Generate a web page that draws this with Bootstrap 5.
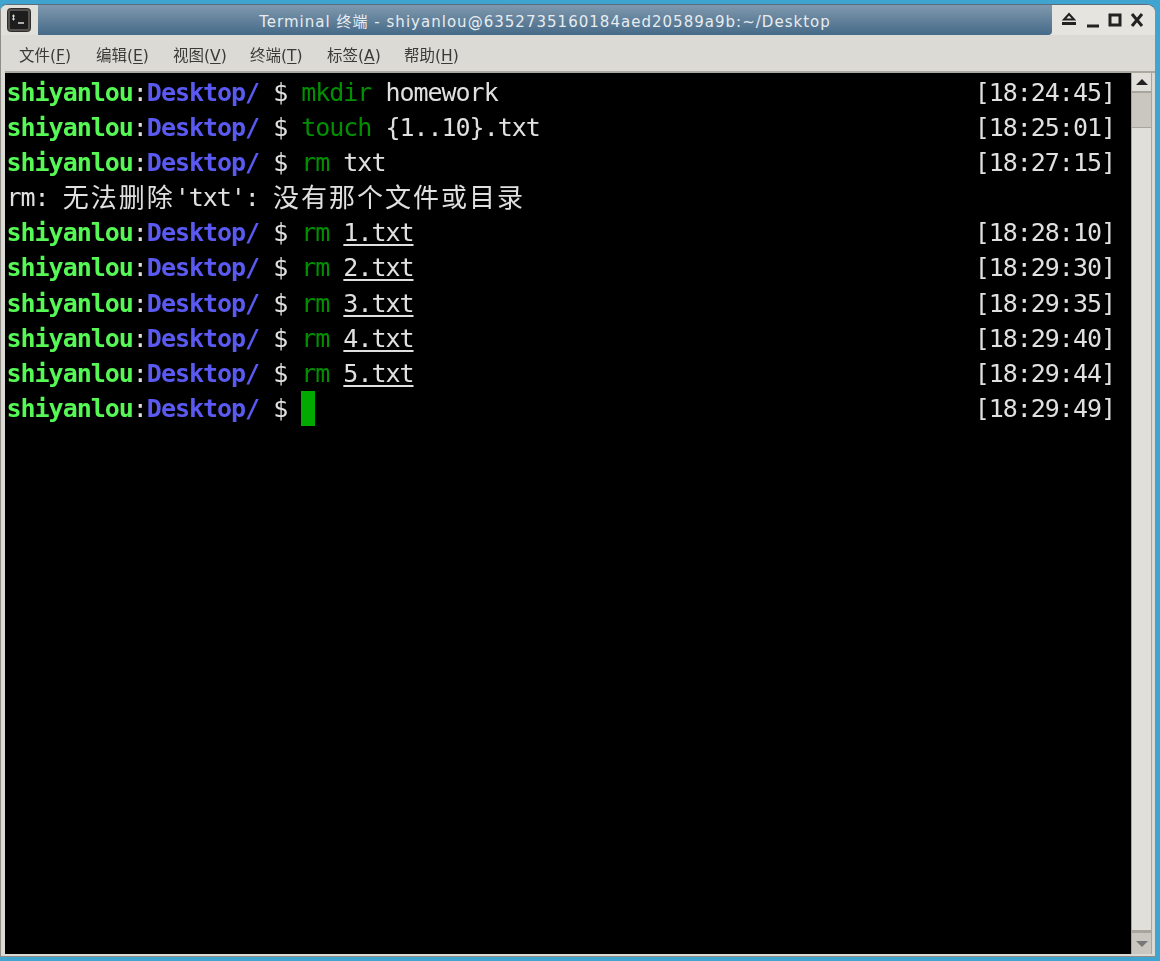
<!doctype html>
<html lang="zh"><head><meta charset="utf-8"><title>Terminal</title>
<link href="https://cdn.jsdelivr.net/npm/bootstrap@5.3.0/dist/css/bootstrap.min.css" rel="stylesheet">
<style>
html,body{height:961px;overflow:hidden}
body{background:#3fa4d0;padding:4px 4px 4px 0}
.win{height:953px;background:#dcdad5;border:1px solid #8f8d88;border-top-color:#5b6d7d;border-radius:7px 9px 0 0;overflow:hidden;filter:blur(.45px)}
.tbar{height:30px;background:#e6e4df}
.ticon{width:37px;background:#e2e0db}
.ticon svg{margin-left:6px}
.ttl{background:linear-gradient(#7f99ae,#466a88);border-radius:0 0 4px 0;color:#e8ecef;font:15px "DejaVu Sans","Noto Sans CJK SC",sans-serif;letter-spacing:1.02px;padding-right:0}
.wbtns{width:103px;gap:0 8px;padding-left:8px}
.mbar{height:36px;font:15.5px "DejaVu Sans","Noto Sans CJK SC",sans-serif;color:#3a3a38;gap:20px;padding-left:18px;padding-top:1px}
.mbar u{text-underline-offset:2px}
.mbar span{width:57px;white-space:nowrap}
.tarea{height:883px;border-top:2px solid #aaa89f;margin-left:4px}
.term{background:#000;padding-top:2px;font:25px/35.1px "DejaVu Sans Mono","Noto Sans CJK SC",monospace;letter-spacing:-1.02px;color:#e0e0e0}
.ln{height:35.1px;padding:0 16px 0 1.500px;white-space:pre}
.gr{color:#55f855;font-weight:600}.bl{color:#5a5af2;font-weight:600}.cm{color:#009000}
.cj{font-size:26px;letter-spacing:2px;vertical-align:-1px}
.ul{text-decoration:underline;text-underline-offset:3px;text-decoration-thickness:2px}
.cur{display:inline-block;width:14px;height:35px;background:#00aa00;vertical-align:top}
.sbar{width:21px;background:#c9c7c0;border-left:1px solid #a7a59e;border-right:1px solid #a7a59e}
.sb{height:20px;background:#e1dfda;border-bottom:2px solid #a7a59e}
.trk{height:34px;background:#c9c7c0}
.sc{height:21px}
.tri{width:0;height:0;border-left:6px solid transparent;border-right:6px solid transparent}
.up{border-bottom:6px solid #222}
.dn{border-top:6px solid #777}
.sx{flex:1;background:#e1dfda;border-top:1px solid #a7a59e;border-bottom:3px solid #a7a59e}
.rg{width:3px}
</style></head><body>
<div class="win d-flex flex-column">
  <div class="tbar d-flex flex-shrink-0">
    <div class="ticon d-flex align-items-center">
      <svg width="24" height="24" viewBox="0 0 24 24"><rect x=".5" y=".5" width="23" height="23" rx="3" fill="#55524f" stroke="#2e2d2b"/><rect x="3" y="3" width="18" height="18" rx="1" fill="#1d1d1d"/><path d="M6.500 6.500v6M5 8h3M5 11h3" stroke="#ddd" stroke-width="1" fill="none"/><path d="M11 15h6" stroke="#ddd" stroke-width="1.500"/></svg>
    </div>
    <div class="ttl flex-grow-1 d-flex align-items-center justify-content-center">Terminal 终端 - shiyanlou@6352735160184aed20589a9b:~/Desktop</div>
    <div class="wbtns d-flex align-items-center flex-shrink-0">
      <svg width="18" height="16" viewBox="0 0 18 16"><path d="M9 2l5 5.500H4z" fill="none" stroke="#222" stroke-width="2"/><path d="M2 11.500h14" stroke="#222" stroke-width="3"/></svg>
      <svg width="14" height="16" viewBox="0 0 14 16"><path d="M1 14h12" stroke="#222" stroke-width="3"/></svg>
      <svg width="14" height="16" viewBox="0 0 14 16"><rect x="2" y="3" width="10" height="10" fill="none" stroke="#222" stroke-width="3"/></svg>
      <svg width="14" height="16" viewBox="0 0 14 16"><path d="M2 2l10 12M12 2L2 14" stroke="#222" stroke-width="3"/></svg>
    </div>
  </div>
  <div class="mbar d-flex align-items-center flex-shrink-0">
    <span>文件(<u>F</u>)</span><span>编辑(<u>E</u>)</span><span>视图(<u>V</u>)</span><span>终端(<u>T</u>)</span><span>标签(<u>A</u>)</span><span>帮助(<u>H</u>)</span>
  </div>
  <div class="tarea d-flex">
    <div class="term flex-grow-1">
<div class="ln d-flex justify-content-between"><span><span class="gr">shiyanlou</span>:<span class="bl">Desktop/</span> $ <span class="cm">mkdir</span> homework</span><span>[18:24:45]</span></div>
<div class="ln d-flex justify-content-between"><span><span class="gr">shiyanlou</span>:<span class="bl">Desktop/</span> $ <span class="cm">touch</span> {1..10}.txt</span><span>[18:25:01]</span></div>
<div class="ln d-flex justify-content-between"><span><span class="gr">shiyanlou</span>:<span class="bl">Desktop/</span> $ <span class="cm">rm</span> txt</span><span>[18:27:15]</span></div>
<div class="ln d-flex"><span>rm: <span class="cj">无法删除</span>'txt': <span class="cj">没有那个文件或目录</span></span></div>
<div class="ln d-flex justify-content-between"><span><span class="gr">shiyanlou</span>:<span class="bl">Desktop/</span> $ <span class="cm">rm</span> <span class="ul">1.txt</span></span><span>[18:28:10]</span></div>
<div class="ln d-flex justify-content-between"><span><span class="gr">shiyanlou</span>:<span class="bl">Desktop/</span> $ <span class="cm">rm</span> <span class="ul">2.txt</span></span><span>[18:29:30]</span></div>
<div class="ln d-flex justify-content-between"><span><span class="gr">shiyanlou</span>:<span class="bl">Desktop/</span> $ <span class="cm">rm</span> <span class="ul">3.txt</span></span><span>[18:29:35]</span></div>
<div class="ln d-flex justify-content-between"><span><span class="gr">shiyanlou</span>:<span class="bl">Desktop/</span> $ <span class="cm">rm</span> <span class="ul">4.txt</span></span><span>[18:29:40]</span></div>
<div class="ln d-flex justify-content-between"><span><span class="gr">shiyanlou</span>:<span class="bl">Desktop/</span> $ <span class="cm">rm</span> <span class="ul">5.txt</span></span><span>[18:29:44]</span></div>
<div class="ln d-flex justify-content-between"><span><span class="gr">shiyanlou</span>:<span class="bl">Desktop/</span> $ <span class="cur"></span></span><span>[18:29:49]</span></div>
    </div>
    <div class="sbar d-flex flex-column flex-shrink-0">
      <div class="sb d-flex align-items-center justify-content-center flex-shrink-0"><div class="tri up"></div></div>
      <div class="trk flex-shrink-0"></div>
      <div class="sx"></div>
      <div class="sc d-flex align-items-center justify-content-center flex-shrink-0"><div class="tri dn"></div></div>
    </div>
    <div class="rg flex-shrink-0"></div>
  </div>
</div>
</body></html>
